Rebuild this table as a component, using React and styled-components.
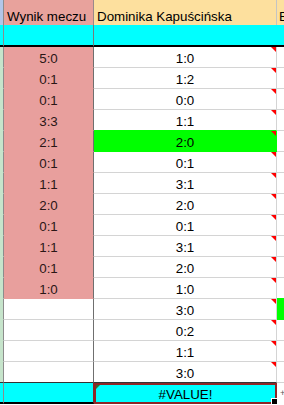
import React from "react";
import styled, { createGlobalStyle } from "styled-components";

const GRID = "#d4d4d4";
const CYAN = "#00ffff";
const PINK = "#e89f9d";
const GREEN = "#00ff00";

const GlobalStyle = createGlobalStyle`
  html, body {
    margin: 0;
    padding: 0;
    background: #fff;
  }
  body {
    font-family: "Liberation Sans", Arial, sans-serif;
    font-size: 13.33px;
    color: #000;
    overflow: hidden;
  }
`;

const Sheet = styled.div`
  display: grid;
  grid-template-columns: 4px 90px 183px 1fr;
  align-content: start;
  width: 284px;
  height: 405px;
  overflow: hidden;
  background: #fff;
`;

const HeadCell = styled.div`
  box-sizing: border-box;
  height: 25px;
  padding: 8px 0 0 ${(p) => p.$pad || 3}px;
  line-height: 17px;
  white-space: nowrap;
  overflow: hidden;
  background: ${(p) => p.$bg};
  border-right: ${(p) => (p.$line ? `1px solid ${p.$line}` : "none")};
`;

const BandCell = styled.div`
  box-sizing: border-box;
  height: 22px;
  background: ${CYAN};
  border-bottom: 2px solid #000;
  border-right: ${(p) => (p.$line ? `1px solid ${p.$line}` : "none")};
`;

const DataCell = styled.div`
  position: relative;
  box-sizing: border-box;
  height: 21px;
  padding-top: 4px;
  line-height: 16px;
  text-align: center;
  color: ${(p) => (p.$bg === PINK ? "#2a1616" : "#000")};
  background: ${(p) => p.$bg || "#fff"};
  border-bottom: 1px solid ${(p) => p.$bottom};
  border-right: ${(p) => (p.$line ? `1px solid ${p.$line}` : "none")};
`;

// red comment marker in the top-right corner of a cell
const CommentMark = styled.span`
  position: absolute;
  top: 0;
  right: 0;
  width: 0;
  height: 0;
  border-top: 5px solid #f00;
  border-left: 5px solid transparent;
`;

const FootCell = styled.div`
  position: relative;
  box-sizing: border-box;
  height: 21px;
  background: ${(p) => p.$bg};
  border-bottom: ${(p) => (p.$bg === CYAN ? "2px solid #000" : "none")};
  border-right: ${(p) => (p.$line ? `1px solid ${p.$line}` : "none")};
`;

const ErrorCell = styled.div`
  position: relative;
  box-sizing: border-box;
  height: 21px;
  padding-top: 2px;
  line-height: 15px;
  text-align: center;
  background: ${CYAN};
  border: 2px solid #8e2626;
`;

const ErrorMark = styled.span`
  position: absolute;
  top: 0;
  left: 0;
  width: 0;
  height: 0;
  border-top: 4px solid #2f6f33;
  border-right: 4px solid transparent;
`;

const FillHandle = styled.span`
  position: absolute;
  right: -3px;
  bottom: -3px;
  width: 5px;
  height: 5px;
  background: #000;
  border: 1px solid #fff;
`;

const SmartTag = styled.span`
  display: block;
  padding: 6px 0 0 3px;
  font-size: 9px;
  line-height: 9px;
  color: #555;
`;

const results = [
  ["5:0", "1:0"],
  ["0:1", "1:2"],
  ["0:1", "0:0"],
  ["3:3", "1:1"],
  ["2:1", "2:0", true],
  ["0:1", "0:1"],
  ["1:1", "3:1"],
  ["2:0", "2:0"],
  ["0:1", "0:1"],
  ["1:1", "3:1"],
  ["0:1", "2:0"],
  ["1:0", "1:0"],
  [null, "3:0", false, true],
  [null, "0:2"],
  [null, "1:1"],
  [null, "3:0"],
];

const fillOf = (row, col) => {
  if (!row) return null;
  if (col === 0) return "#c6e4cb";
  if (col === 1) return row[0] ? PINK : null;
  if (col === 2) return row[2] ? GREEN : null;
  return row[3] ? GREEN : null;
};

const bottomOf = (i, col) => {
  if (i === results.length - 1 && col < 3) return "#333";
  return fillOf(results[i], col) || fillOf(results[i + 1], col) || GRID;
};

const App = () => {
  return (
    <>
      <GlobalStyle />
      <Sheet>
        <HeadCell $bg="#b3c6e9" $line="#8c8c8c" />
        <HeadCell $bg="#e8a29c" $line="#9a8a8a">Wynik meczu</HeadCell>
        <HeadCell $bg="#fde09e" $line="#c4c4c4">Dominika Kapuścińska</HeadCell>
        <HeadCell $bg="#fde09e" $pad={2}>B</HeadCell>

        <BandCell $line="#8c8c8c" />
        <BandCell $line="#7a7a7a" />
        <BandCell />
        <BandCell />

        {results.map((row, i) => (
          <React.Fragment key={i}>
            <DataCell $bg={fillOf(row, 0)} $bottom={bottomOf(i, 0)} $line="#8c8c8c" />
            <DataCell $bg={fillOf(row, 1)} $bottom={bottomOf(i, 1)} $line="#6f6f6f">
              {row[0]}
            </DataCell>
            <DataCell
              $bg={fillOf(row, 2)}
              $bottom={bottomOf(i, 2)}
              $line={row[2] ? GREEN : GRID}
            >
              {row[1]}
              <CommentMark />
            </DataCell>
            <DataCell $bg={fillOf(row, 3)} $bottom={bottomOf(i, 3)} />
          </React.Fragment>
        ))}

        <FootCell $bg={CYAN} $line="#8c8c8c" />
        <FootCell $bg={CYAN} $line="#8e2626" />
        <ErrorCell>
          <ErrorMark />
          #VALUE!
          <FillHandle />
        </ErrorCell>
        <FootCell $bg="#fff">
          <SmartTag>+</SmartTag>
        </FootCell>
      </Sheet>
    </>
  );
};

export default App;
